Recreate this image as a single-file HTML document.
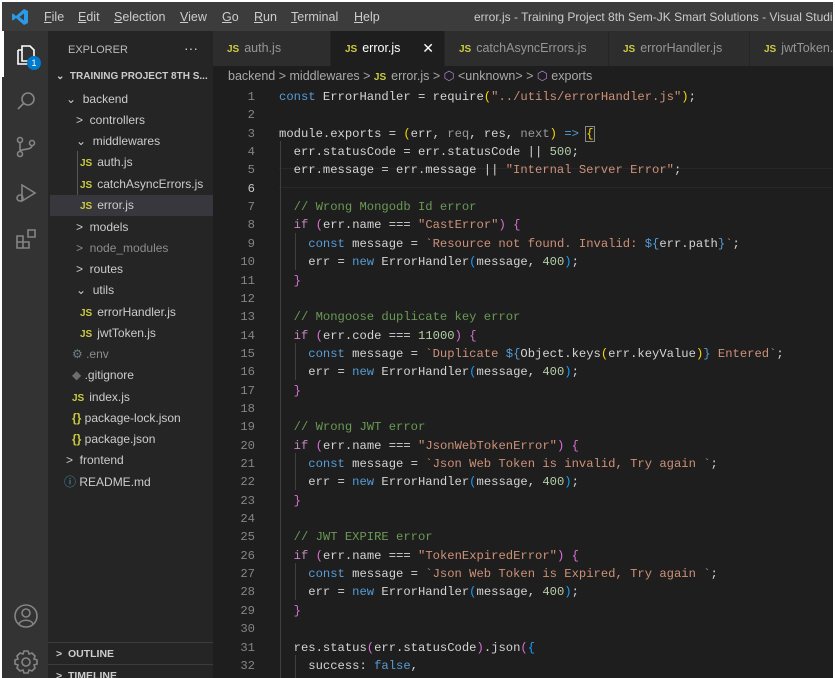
<!DOCTYPE html>
<html><head><meta charset="utf-8">
<style>
*{margin:0;padding:0;box-sizing:border-box}
body{width:835px;height:678px;background:#fff;position:relative;overflow:hidden;font-family:"Liberation Sans",sans-serif}
#app{position:absolute;left:2px;top:2px;width:831px;height:676px;background:#1e1e1e;overflow:hidden}
#title{position:absolute;left:0;top:0;width:831px;height:29px;background:#3c3c3c;color:#ccc;font-size:12.5px;overflow:hidden}
#title span{position:absolute;top:8px;white-space:nowrap}
#act{position:absolute;left:0;top:29px;width:46px;height:647px;background:#333}
#side{position:absolute;left:46px;top:29px;width:165px;height:647px;background:#252526;color:#ccc;font-size:12px}
.row{position:absolute;height:21px;line-height:21px;white-space:nowrap}
.js{color:#cbcb41;font-weight:bold;font-size:10px;margin-right:5px}
#tabs{position:absolute;left:211px;top:29px;width:620px;height:35px;background:#252526}
.tab{position:absolute;top:0;height:35px;line-height:35px;background:#2d2d2d;color:#969696;font-size:12.5px;padding-left:14px;border-right:1px solid #252526;white-space:nowrap;overflow:hidden}
#bc{position:absolute;left:226px;top:66px;color:#a9a9a9;font-size:12.5px;white-space:nowrap}
#code{position:absolute;left:211px;top:84px;width:620px;font-family:"Liberation Mono",monospace;font-size:12.2px;color:#d4d4d4}
.l{position:absolute;left:0;height:18.35px;line-height:18.35px;white-space:pre;width:620px}
.ln{position:absolute;width:42px;text-align:right;color:#858585}
.tx{position:absolute;left:66px}
.k{color:#569cd6}.c{color:#6a9955}.s{color:#ce9178}.n{color:#b5cea8}.p{color:#c586c0}.y{color:#ffd700}.m{color:#da70d6}.b{color:#179fff}.v{color:#9cdcfe}
.g{position:absolute;width:1px;background:#404040}
</style></head><body><div id="app">
<div id="title">
<svg style="position:absolute;left:9px;top:6px" width="18" height="18" viewBox="0 0 18 18"><path d="M13 1 L17 3 V15 L13 17 L5 10 L2 12.5 L1 12 V6 L2 5.5 L5 8 Z M13 5.5 L8.5 9 L13 12.5 Z" fill="#2a9ae6"/></svg>
<span style="left:42px"><u>F</u>ile</span><span style="left:76px"><u>E</u>dit</span><span style="left:112px"><u>S</u>election</span><span style="left:178px"><u>V</u>iew</span><span style="left:220px"><u>G</u>o</span><span style="left:252px"><u>R</u>un</span><span style="left:289px"><u>T</u>erminal</span><span style="left:352px"><u>H</u>elp</span>
<span style="left:472px;color:#ccc;font-size:12px">error.js - Training Project 8th Sem-JK Smart Solutions - Visual Studio Code</span>
</div>
<div id="act">
<div style="position:absolute;left:0;top:0;width:2px;height:46px;background:#fff"></div>
<svg style="position:absolute;left:12px;top:12px" width="24" height="24" viewBox="0 0 24 24" fill="none" stroke="#fff" stroke-width="1.6"><path d="M8 3h8l4 4v11H8z M4 7h4 M4 7v14h11v-3"/></svg>
<div style="position:absolute;left:25px;top:25px;width:14px;height:14px;border-radius:7px;background:#007acc;color:#fff;font-size:9px;text-align:center;line-height:14px">1</div>
<svg style="position:absolute;left:12px;top:58px" width="24" height="24" viewBox="0 0 24 24" fill="none" stroke="#858585" stroke-width="1.6"><circle cx="14" cy="10" r="6"/><path d="M10 14L4 20"/></svg>
<svg style="position:absolute;left:12px;top:104px" width="24" height="24" viewBox="0 0 24 24" fill="none" stroke="#858585" stroke-width="1.6"><circle cx="6" cy="5" r="2.5"/><circle cx="6" cy="19" r="2.5"/><circle cx="18" cy="8" r="2.5"/><path d="M6 7.5v9 M18 10.5c0 5-12 3-12 6"/></svg>
<svg style="position:absolute;left:12px;top:150px" width="24" height="24" viewBox="0 0 24 24" fill="none" stroke="#858585" stroke-width="1.6"><path d="M8 4l13 8-13 8z"/><circle cx="6" cy="17" r="3"/></svg>
<svg style="position:absolute;left:12px;top:196px" width="24" height="24" viewBox="0 0 24 24" fill="none" stroke="#858585" stroke-width="1.6"><path d="M3 9h6v6H3z M9 15h6v6H9z M3 15h6v6H3z M14 3h7v7h-7z"/></svg>
<svg style="position:absolute;left:11px;top:572px" width="26" height="26" viewBox="0 0 26 26" fill="none" stroke="#858585" stroke-width="1.6"><circle cx="13" cy="13" r="11"/><circle cx="13" cy="10" r="4"/><path d="M6 21c2-5 12-5 14 0"/></svg>
<svg style="position:absolute;left:11px;top:618px" width="26" height="26" viewBox="0 0 26 26" fill="none" stroke="#858585" stroke-width="1.6"><circle cx="13" cy="13" r="4"/><path d="M11 2h4l1 3 3-1 3 3-1 3 3 1v4l-3 1 1 3-3 3-3-1-1 3h-4l-1-3-3 1-3-3 1-3-3-1v-4l3-1-1-3 3-3 3 1z"/></svg>
</div>
<div id="side">
<div class="row" style="left:20px;top:9px;font-size:11px;color:#bbb">EXPLORER</div>
<div class="row" style="left:136px;top:7px;font-size:14px">···</div>
<div class="row" style="left:8px;top:35px;font-size:10px;font-weight:bold">&#8964;&nbsp; TRAINING PROJECT 8TH S...</div>
<div class="row" style="left:18px;top:58px">&#8964;&nbsp; backend</div>
<div class="row" style="left:28px;top:79px">&gt;&nbsp; controllers</div>
<div class="row" style="left:28px;top:100px">&#8964;&nbsp; middlewares</div>
<div style="position:absolute;left:29px;top:120px;width:1px;height:64px;background:#585858"></div>
<div class="row" style="left:32px;top:121px"><span class="js">JS</span>auth.js</div>
<div class="row" style="left:32px;top:143px"><span class="js">JS</span>catchAsyncErrors.js</div>
<div class="row" style="left:2px;top:164px;width:163px;background:#37373d;padding-left:30px"><span class="js">JS</span>error.js</div>
<div class="row" style="left:28px;top:186px">&gt;&nbsp; models</div>
<div class="row" style="left:28px;top:207px;color:#8c8c8c">&gt;&nbsp; node_modules</div>
<div class="row" style="left:28px;top:228px">&gt;&nbsp; routes</div>
<div class="row" style="left:28px;top:249px">&#8964;&nbsp; utils</div>
<div class="row" style="left:32px;top:271px"><span class="js">JS</span>errorHandler.js</div>
<div class="row" style="left:32px;top:292px"><span class="js">JS</span>jwtToken.js</div>
<div class="row" style="left:24px;top:313px;color:#8c8c8c"><span style="color:#6d8086">&#9881;</span> .env</div>
<div class="row" style="left:24px;top:334px"><span style="color:#6d6d6d">&#9670;</span> .gitignore</div>
<div class="row" style="left:24px;top:356px"><span class="js">JS</span>index.js</div>
<div class="row" style="left:24px;top:377px"><span style="color:#cbcb41;font-weight:bold">{}</span> package-lock.json</div>
<div class="row" style="left:24px;top:398px"><span style="color:#cbcb41;font-weight:bold">{}</span> package.json</div>
<div class="row" style="left:18px;top:419px">&gt;&nbsp; frontend</div>
<div class="row" style="left:16px;top:441px"><span style="color:#519aba">&#9432;</span> README.md</div>
<div style="position:absolute;left:0;top:611px;width:165px;height:1px;background:#3c3c3c"></div>
<div class="row" style="left:8px;top:613px;font-size:10.5px;font-weight:bold">&gt;&nbsp; OUTLINE</div>
<div style="position:absolute;left:0;top:633px;width:165px;height:1px;background:#3c3c3c"></div>
<div class="row" style="left:8px;top:635px;font-size:10.5px;font-weight:bold">&gt;&nbsp; TIMELINE</div>
</div>
<div id="tabs">
<div class="tab" style="left:0;width:118px"><span class="js">JS</span>auth.js</div>
<div class="tab" style="left:118px;width:114px;background:#1e1e1e;color:#fff"><span class="js">JS</span>error.js<span style="position:absolute;right:10px;font-size:14px">✕</span></div>
<div class="tab" style="left:232px;width:164px"><span class="js">JS</span>catchAsyncErrors.js</div>
<div class="tab" style="left:396px;width:141px"><span class="js">JS</span>errorHandler.js</div>
<div class="tab" style="left:537px;width:100px"><span class="js">JS</span>jwtToken.js</div>
</div>
<div id="bc">backend &gt; middlewares &gt; <span class="js">JS</span>error.js &gt; <span style="color:#b180d7">&#11041;</span> &lt;unknown&gt; &gt; <span style="color:#b180d7">&#11041;</span> exports</div>
<div id="code">
<div style="position:absolute;left:66px;top:82px;width:554px;height:20px;border-top:1px solid #282828;border-bottom:1px solid #282828"></div>
<div class="g" style="left:67px;top:55px;height:560px"></div>
<div class="g" style="left:82px;top:147px;height:37px"></div>
<div class="g" style="left:82px;top:257px;height:37px"></div>
<div class="g" style="left:82px;top:367px;height:37px"></div>
<div class="g" style="left:82px;top:477px;height:37px"></div>
<div class="g" style="left:82px;top:569px;height:30px"></div>
<div class="l" style="top:2px"><span class="ln">1</span><span class="tx"><span class="k">const</span> ErrorHandler = require<span class="y">(</span><span class="s">"../utils/errorHandler.js"</span><span class="y">)</span>;</span></div>
<div class="l" style="top:20.35px"><span class="ln">2</span></div>
<div class="l" style="top:38.7px"><span class="ln">3</span><span class="tx">module.exports = <span class="y">(</span>err, <span style="color:#9a9a9a">req</span>, res, <span style="color:#9a9a9a">next</span><span class="y">)</span> <span class="k">=&gt;</span> <span class="y" style="outline:1px solid #888">{</span></span></div>
<div class="l" style="top:57.05px"><span class="ln">4</span><span class="tx">  err.statusCode = err.statusCode || <span class="n">500</span>;</span></div>
<div class="l" style="top:75.4px"><span class="ln">5</span><span class="tx">  err.message = err.message || <span class="s">"Internal Server Error"</span>;</span></div>
<div class="l" style="top:93.75px"><span class="ln" style="color:#c6c6c6">6</span></div>
<div class="l" style="top:112.1px"><span class="ln">7</span><span class="tx">  <span class="c">// Wrong Mongodb Id error</span></span></div>
<div class="l" style="top:130.45px"><span class="ln">8</span><span class="tx">  <span class="p">if</span> <span class="m">(</span>err.name === <span class="s">"CastError"</span><span class="m">)</span> <span class="m">{</span></span></div>
<div class="l" style="top:148.8px"><span class="ln">9</span><span class="tx">    <span class="k">const</span> message = <span class="s">`Resource not found. Invalid: </span><span class="k">${</span>err.path<span class="k">}</span><span class="s">`</span>;</span></div>
<div class="l" style="top:167.15px"><span class="ln">10</span><span class="tx">    err = <span class="k">new</span> ErrorHandler<span class="b">(</span>message, <span class="n">400</span><span class="b">)</span>;</span></div>
<div class="l" style="top:185.5px"><span class="ln">11</span><span class="tx">  <span class="m">}</span></span></div>
<div class="l" style="top:203.85px"><span class="ln">12</span></div>
<div class="l" style="top:222.2px"><span class="ln">13</span><span class="tx">  <span class="c">// Mongoose duplicate key error</span></span></div>
<div class="l" style="top:240.55px"><span class="ln">14</span><span class="tx">  <span class="p">if</span> <span class="m">(</span>err.code === <span class="n">11000</span><span class="m">)</span> <span class="m">{</span></span></div>
<div class="l" style="top:258.9px"><span class="ln">15</span><span class="tx">    <span class="k">const</span> message = <span class="s">`Duplicate </span><span class="k">${</span>Object.keys<span class="y">(</span>err.keyValue<span class="y">)</span><span class="k">}</span><span class="s"> Entered`</span>;</span></div>
<div class="l" style="top:277.25px"><span class="ln">16</span><span class="tx">    err = <span class="k">new</span> ErrorHandler<span class="b">(</span>message, <span class="n">400</span><span class="b">)</span>;</span></div>
<div class="l" style="top:295.6px"><span class="ln">17</span><span class="tx">  <span class="m">}</span></span></div>
<div class="l" style="top:313.95px"><span class="ln">18</span></div>
<div class="l" style="top:332.3px"><span class="ln">19</span><span class="tx">  <span class="c">// Wrong JWT error</span></span></div>
<div class="l" style="top:350.65px"><span class="ln">20</span><span class="tx">  <span class="p">if</span> <span class="m">(</span>err.name === <span class="s">"JsonWebTokenError"</span><span class="m">)</span> <span class="m">{</span></span></div>
<div class="l" style="top:369px"><span class="ln">21</span><span class="tx">    <span class="k">const</span> message = <span class="s">`Json Web Token is invalid, Try again `</span>;</span></div>
<div class="l" style="top:387.35px"><span class="ln">22</span><span class="tx">    err = <span class="k">new</span> ErrorHandler<span class="b">(</span>message, <span class="n">400</span><span class="b">)</span>;</span></div>
<div class="l" style="top:405.7px"><span class="ln">23</span><span class="tx">  <span class="m">}</span></span></div>
<div class="l" style="top:424.05px"><span class="ln">24</span></div>
<div class="l" style="top:442.4px"><span class="ln">25</span><span class="tx">  <span class="c">// JWT EXPIRE error</span></span></div>
<div class="l" style="top:460.75px"><span class="ln">26</span><span class="tx">  <span class="p">if</span> <span class="m">(</span>err.name === <span class="s">"TokenExpiredError"</span><span class="m">)</span> <span class="m">{</span></span></div>
<div class="l" style="top:479.1px"><span class="ln">27</span><span class="tx">    <span class="k">const</span> message = <span class="s">`Json Web Token is Expired, Try again `</span>;</span></div>
<div class="l" style="top:497.45px"><span class="ln">28</span><span class="tx">    err = <span class="k">new</span> ErrorHandler<span class="b">(</span>message, <span class="n">400</span><span class="b">)</span>;</span></div>
<div class="l" style="top:515.8px"><span class="ln">29</span><span class="tx">  <span class="m">}</span></span></div>
<div class="l" style="top:534.15px"><span class="ln">30</span></div>
<div class="l" style="top:552.5px"><span class="ln">31</span><span class="tx">  res.status<span class="m">(</span>err.statusCode<span class="m">)</span>.json<span class="m">(</span><span class="b">{</span></span></div>
<div class="l" style="top:570.85px"><span class="ln">32</span><span class="tx">    success: <span class="k">false</span>,</span></div>
</div>
</div></body></html>
